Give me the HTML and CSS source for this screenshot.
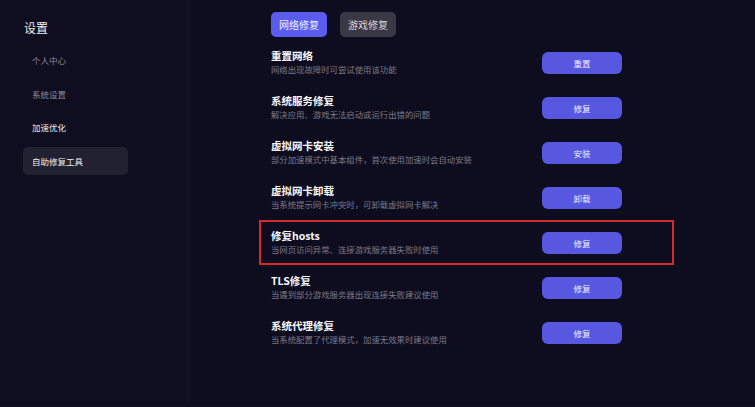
FILE: index.html
```html
<!DOCTYPE html>
<html lang="zh-CN">
<head>
<meta charset="utf-8">
<title>设置</title>
<link rel="stylesheet" href="styles.css">
</head>
<body>
<div class="app">
  <aside class="sidebar">
    <div class="side-title">设置</div>
    <nav class="side-nav">
      <div class="side-item">个人中心</div>
      <div class="side-item">系统设置</div>
      <div class="side-item bright">加速优化</div>
      <div class="side-item active">自助修复工具</div>
    </nav>
  </aside>
  <main class="main">
    <div class="tabs">
      <div class="tab tab-on">网络修复</div>
      <div class="tab tab-off">游戏修复</div>
    </div>
    <div class="rows">
      <div class="row">
        <div class="info"><div class="title">重置网络</div><div class="desc">网络出现故障时可尝试使用该功能</div></div>
        <button class="btn">重置</button>
      </div>
      <div class="row">
        <div class="info"><div class="title">系统服务修复</div><div class="desc">解决应用、游戏无法启动或运行出错的问题</div></div>
        <button class="btn">修复</button>
      </div>
      <div class="row">
        <div class="info"><div class="title">虚拟网卡安装</div><div class="desc">部分加速模式中基本组件，首次使用加速时会自动安装</div></div>
        <button class="btn">安装</button>
      </div>
      <div class="row">
        <div class="info"><div class="title">虚拟网卡卸载</div><div class="desc">当系统提示网卡冲突时，可卸载虚拟网卡解决</div></div>
        <button class="btn">卸载</button>
      </div>
      <div class="row marked">
        <div class="info"><div class="title">修复hosts</div><div class="desc">当网页访问异常、连接游戏服务器失败时使用</div></div>
        <button class="btn">修复</button>
      </div>
      <div class="row">
        <div class="info"><div class="title">TLS修复</div><div class="desc">当遇到部分游戏服务器出现连接失败建议使用</div></div>
        <button class="btn">修复</button>
      </div>
      <div class="row">
        <div class="info"><div class="title">系统代理修复</div><div class="desc">当系统配置了代理模式，加速无效果时建议使用</div></div>
        <button class="btn">修复</button>
      </div>
    </div>
  </main>
</div>
</body>
</html>
```
FILE: styles.css
```css
* { box-sizing: border-box; }
html, body { margin: 0; padding: 0; }
body {
  width: 755px;
  height: 407px;
  background: #0e0d1f;
  font-family: "Noto Sans CJK SC", "Noto Sans", sans-serif;
  color: #fff;
  overflow: hidden;
}
.app {
  display: flex;
  height: 403px;
  border-bottom: 1px solid #0b0a18;
}
.sidebar {
  width: 190px;
  flex: none;
  background: #0f0e21;
  border-right: 3px solid #121126;
  padding: 19px 0 0 23px;
}
.side-title {
  font-size: 12px;
  line-height: 18px;
  padding-left: 1px;
  color: #f2f2f6;
}
.side-nav {
  margin-top: 9px;
  display: flex;
  flex-direction: column;
  gap: 5.5px;
}
.side-item {
  width: 105px;
  height: 28px;
  line-height: 28px;
  padding-left: 9px;
  font-size: 8.5px;
  color: #8b8a98;
  border-radius: 5px;
}
.side-item.bright { color: #e6e6ee; }
.side-item.active {
  background: #222131;
  color: #f0f0f5;
}
.main {
  flex: 1;
  padding: 12px 0 0 69px;
}
.tabs {
  display: flex;
  gap: 13px;
  padding-left: 12px;
}
.tab {
  width: 56px;
  height: 25px;
  line-height: 25px;
  text-align: center;
  font-size: 10px;
  border-radius: 5px;
}
.tab-on { background: #5a5cee; color: #f2f2ff; }
.tab-off { background: #393844; color: #d8d8e0; }
.rows {
  margin-top: 3px;
  width: 415px;
  display: flex;
  flex-direction: column;
}
.row {
  height: 45px;
  display: flex;
  align-items: center;
  padding: 0 50px 0 10px;
  border: 2px solid transparent;
}
.row.marked { border-color: #d42a2a; }
.info { flex: 1; }
.title {
  font-size: 10.5px;
  font-weight: 700;
  line-height: 14px;
  color: #fafafc;
}
.desc {
  font-size: 8.4px;
  line-height: 12.5px;
  color: #7b7a88;
}
.btn {
  width: 80px;
  height: 22px;
  border: none;
  border-radius: 6px;
  background: #5757df;
  color: #f0f0ff;
  font-family: inherit;
  font-size: 8.5px;
  padding: 0;
}
```
